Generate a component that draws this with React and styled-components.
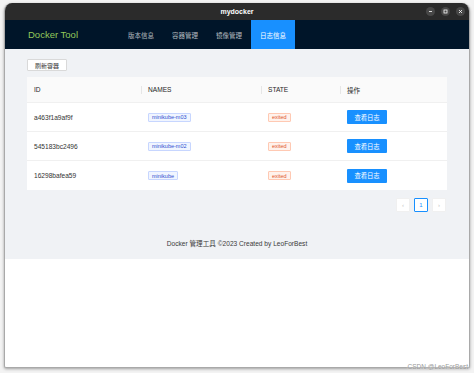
import React from 'react'
import styled, { createGlobalStyle } from 'styled-components'

const GlobalStyle = createGlobalStyle`
  html, body {
    margin: 0;
    padding: 0;
    background: #f3f3f3;
  }
  * {
    box-sizing: border-box;
  }
`

const FONT = `"Liberation Sans", "Noto Sans CJK SC", Arial, sans-serif`

const Desktop = styled.div`
  position: relative;
  width: 474px;
  height: 373px;
  padding: 3px 4px 5px 4px;
  font-family: ${FONT};
`

const Window = styled.div`
  height: 100%;
  display: flex;
  flex-direction: column;
  border-radius: 8px 8px 2px 2px;
  overflow: hidden;
  border: 1px solid #a9a9a9;
  border-top: none;
  box-shadow: 0 1px 3px rgba(0, 0, 0, 0.35);
  background: #fff;
`

const TitleBar = styled.div`
  position: relative;
  height: 17px;
  flex: none;
  background: #2b2b2b;
  display: flex;
  align-items: center;
  justify-content: center;
  color: #fff;
  font-size: 7px;
  font-weight: bold;
`

const WinButtons = styled.div`
  position: absolute;
  right: 4px;
  top: 4px;
  display: flex;
  gap: 6px;
`

const WinButton = styled.span`
  width: 9px;
  height: 9px;
  border-radius: 50%;
  background: #474747;
  display: flex;
  align-items: center;
  justify-content: center;
`

const NavBar = styled.div`
  height: 29px;
  flex: none;
  background: #001529;
  display: flex;
  align-items: stretch;
  padding-left: 23px;
`

const Logo = styled.div`
  color: #93c95a;
  font-size: 9.5px;
  display: flex;
  align-items: center;
  width: 91px;
`

const MenuItem = styled.div`
  width: 44px;
  display: flex;
  align-items: center;
  justify-content: center;
  font-size: 6.5px;
  color: ${({ active }) => (active ? '#fff' : 'rgba(255,255,255,0.7)')};
  background: ${({ active }) => (active ? '#1890ff' : 'transparent')};
`

const Main = styled.div`
  background: #f0f2f5;
  padding: 10px 22px 0 22px;
  height: 210px;
  flex: none;
  display: flex;
  flex-direction: column;
`

const RefreshButton = styled.button`
  align-self: flex-start;
  height: 12px;
  width: 40px;
  padding: 0;
  border: 1px solid #d9d9d9;
  background: #fff;
  font-family: ${FONT};
  font-size: 6px;
  color: #333;
  border-radius: 1px;
  margin-bottom: 6px;
`

const Card = styled.div`
  background: #fff;
`

const Row = styled.div`
  display: grid;
  grid-template-columns: 114px 120px 79px 1fr;
  align-items: center;
  height: ${({ head }) => (head ? '26px' : '29px')};
  background: ${({ head }) => (head ? '#fafafa' : '#fff')};
  border-bottom: ${({ last }) => (last ? 'none' : '1px solid #f0f0f0')};
  font-size: 6.6px;
  color: ${({ head }) => (head ? '#262626' : '#333')};
`

const Cell = styled.div`
  position: relative;
  padding-left: 7px;
  display: flex;
  align-items: center;
  height: 100%;

  ${({ sep }) => sep && `
    &::before {
      content: '';
      position: absolute;
      left: 0;
      top: 50%;
      width: 1px;
      height: 8px;
      margin-top: -4px;
      background: #e6e6e6;
    }
  `}
`

const Tag = styled.span`
  display: inline-flex;
  align-items: center;
  height: 9px;
  padding: 0 3px;
  font-size: 5.5px;
  border-radius: 1px;
  border: 1px solid ${({ tone }) => (tone === 'red' ? '#ffc9b3' : '#c7d6ff')};
  background: ${({ tone }) => (tone === 'red' ? '#fff2ec' : '#f0f5ff')};
  color: ${({ tone }) => (tone === 'red' ? '#e0562a' : '#2f4fd0')};
`

const LogButton = styled.button`
  width: 40px;
  height: 14px;
  padding: 0;
  border: none;
  border-radius: 1px;
  background: #1890ff;
  color: #fff;
  font-family: ${FONT};
  font-size: 6.3px;
`

const Pager = styled.div`
  display: flex;
  justify-content: flex-end;
  gap: 4px;
  margin-top: 8px;
  padding-right: 1px;
`

const PageBox = styled.span`
  width: 14px;
  height: 14px;
  display: flex;
  align-items: center;
  justify-content: center;
  border: 1px solid ${({ current }) => (current ? '#1890ff' : '#f0f0f0')};
  background: #fff;
  color: ${({ current }) => (current ? '#1890ff' : '#c4c4c4')};
  font-size: 6px;
  border-radius: 1px;
`

const Footer = styled.div`
  text-align: center;
  font-size: 6.6px;
  color: #3a3a3a;
  padding-top: 26px;
`

const Watermark = styled.div`
  position: absolute;
  right: 6px;
  bottom: 3px;
  font-size: 6.5px;
  color: #9a9a9a;
  text-shadow: 0 0 2px #fff;
`

const containers = [
  { id: 'a463f1a9af9f', name: 'minikube-m03', state: 'exited' },
  { id: '545183bc2496', name: 'minikube-m02', state: 'exited' },
  { id: '16298bafea59', name: 'minikube', state: 'exited' },
]

const menu = ['版本信息', '容器管理', '镜像管理', '日志信息']

export default function App() {
  return (
    <>
      <GlobalStyle />
      <Desktop>
        <Window>
          <TitleBar>
            mydocker
            <WinButtons>
              <WinButton>
                <svg width="5" height="5" viewBox="0 0 5 5">
                  <path d="M1 2.5h3" stroke="#fff" strokeWidth="0.8" />
                </svg>
              </WinButton>
              <WinButton>
                <svg width="5" height="5" viewBox="0 0 5 5">
                  <rect x="1" y="1" width="3" height="3" fill="none" stroke="#fff" strokeWidth="0.8" />
                </svg>
              </WinButton>
              <WinButton>
                <svg width="5" height="5" viewBox="0 0 5 5">
                  <path d="M1 1l3 3M4 1l-3 3" stroke="#fff" strokeWidth="0.8" />
                </svg>
              </WinButton>
            </WinButtons>
          </TitleBar>
          <NavBar>
            <Logo>Docker Tool</Logo>
            {menu.map((m, i) => (
              <MenuItem key={m} active={i === 3}>{m}</MenuItem>
            ))}
          </NavBar>
          <Main>
            <RefreshButton>刷新容器</RefreshButton>
            <Card>
              <Row head>
                <Cell>ID</Cell>
                <Cell sep>NAMES</Cell>
                <Cell sep>STATE</Cell>
                <Cell sep>操作</Cell>
              </Row>
              {containers.map((c, i) => (
                <Row key={c.id} last={i === containers.length - 1}>
                  <Cell>{c.id}</Cell>
                  <Cell><Tag>{c.name}</Tag></Cell>
                  <Cell><Tag tone="red">{c.state}</Tag></Cell>
                  <Cell><LogButton>查看日志</LogButton></Cell>
                </Row>
              ))}
            </Card>
            <Pager>
              <PageBox>‹</PageBox>
              <PageBox current>1</PageBox>
              <PageBox>›</PageBox>
            </Pager>
            <Footer>Docker 管理工具 ©2023 Created by LeoForBest</Footer>
          </Main>
        </Window>
        <Watermark>CSDN @LeoForBest</Watermark>
      </Desktop>
    </>
  )
}
